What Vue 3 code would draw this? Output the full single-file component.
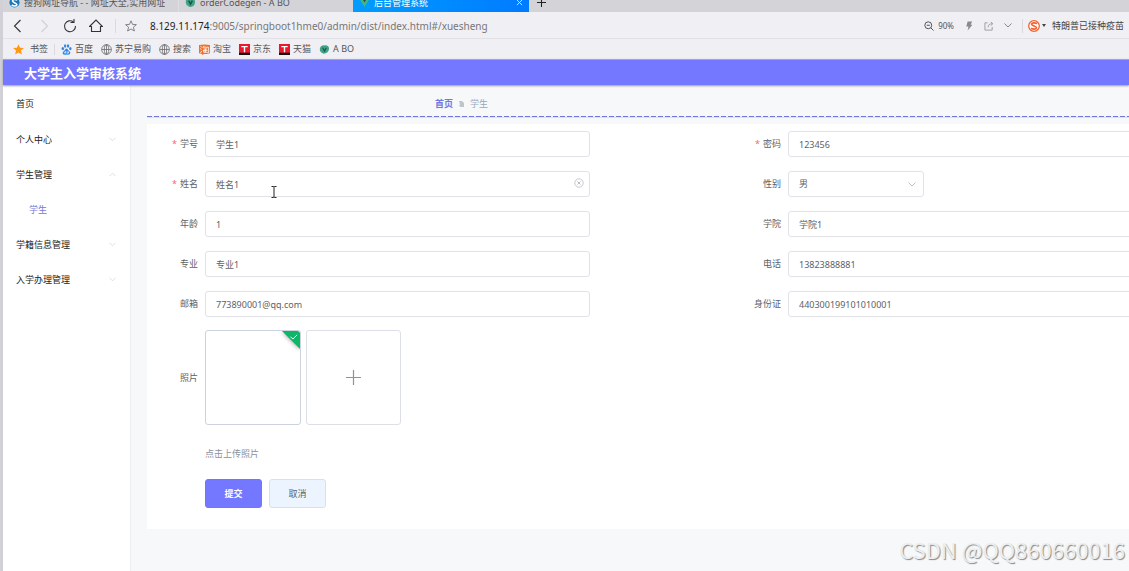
<script setup>
import { reactive } from 'vue'

const form = reactive({
  number: '学生1',
  password: '123456',
  name: '姓名1',
  gender: '男',
  age: '1',
  college: '学院1',
  major: '专业1',
  phone: '13823888881',
  email: '773890001@qq.com',
  idCard: '440300199101010001',
})

const fields = [
  { key: 'number', label: '学号', required: true },
  { key: 'password', label: '密码', required: true },
  { key: 'name', label: '姓名', required: true, clearable: true },
  { key: 'gender', label: '性别', select: true },
  { key: 'age', label: '年龄' },
  { key: 'college', label: '学院' },
  { key: 'major', label: '专业' },
  { key: 'phone', label: '电话' },
  { key: 'email', label: '邮箱' },
  { key: 'idCard', label: '身份证' },
]

const menu = [
  { label: '首页' },
  { label: '个人中心', arrow: 'fold' },
  { label: '学生管理', arrow: 'unfold' },
  { label: '学生', sub: true },
  { label: '学籍信息管理', arrow: 'fold' },
  { label: '入学办理管理', arrow: 'fold' },
]

const bookmarks = [
  { label: '百度', icon: 'paw' },
  { label: '苏宁易购', icon: 'globe' },
  { label: '搜索', icon: 'globe' },
  { label: '淘宝', icon: 'tao' },
  { label: '京东', icon: 't' },
  { label: '天猫', icon: 't' },
  { label: 'A BO', icon: 'v' },
]
</script>

<template>
  <div class="window">
    <div class="tabs">
      <div class="tab tab-first">
        <svg class="tab-icon" viewBox="0 0 12 12"><circle cx="6" cy="6" r="5.500" fill="#1b78b8" /><path d="M9 3.500C7 2 3.500 2.500 4 4.500S9 6.500 8.500 8.500 4.500 10 3 8.500" fill="none" stroke="#fff" stroke-width="1.800" /></svg>
        <span class="fade">搜狗网址导航 - - 网址大全,实用网址,</span>
      </div>
      <div class="tab tab-second">
        <svg class="tab-icon" viewBox="0 0 12 12"><path d="M1 4Q2 1 6 1q5 0 5 5-1 5-6 5Q0 9 1 4Z" fill="#3fa386" /><path d="m4 4 2 4 2-4" fill="none" stroke="#234d48" stroke-width="1.500" /></svg>
        <span>orderCodegen - A BO</span>
      </div>
      <div class="tab tab-active">
        <svg class="tab-icon" viewBox="0 0 12 12"><path d="M0 1h12L6 11Z" fill="#41b883" /><path d="M3 1h6L6 6Z" fill="#34495e" /></svg>
        <span>后台管理系统</span>
        <button class="plain close" aria-label="关闭标签"><svg viewBox="0 0 8 8"><path d="m1 1 6 6M7 1 1 7" stroke="#d8efff" fill="none" /></svg></button>
      </div>
      <button class="plain new-tab" aria-label="新标签"><svg viewBox="0 0 10 10"><path d="M5 0v10M0 5h10" stroke="#222" stroke-width="1.200" fill="none" /></svg></button>
    </div>

    <div class="address">
      <button class="plain nav" aria-label="后退"><svg viewBox="0 0 14 14"><path d="M9.500 1 3.500 7l6 6" class="line dark" /></svg></button>
      <button class="plain nav" aria-label="前进"><svg viewBox="0 0 14 14"><path d="m4.500 1 6 6-6 6" class="line pale" /></svg></button>
      <button class="plain nav" aria-label="刷新"><svg viewBox="0 0 14 14"><path d="M10.500 3A5.500 5.500 0 1 0 12.500 7" class="line dark" /><path d="M7.500 3.500H11V0" class="line dark" /></svg></button>
      <button class="plain nav" aria-label="主页"><svg viewBox="0 0 14 14"><path d="M.5 7.500 7 1l6.500 6.500H11.500v5h-9v-5Z" class="line dark" /></svg></button>
      <i class="bar"></i>
      <button class="plain star" aria-label="收藏"><svg viewBox="0 0 12 12"><path d="m6 .8 1.500 3.600 3.900.3-3 2.500 1 3.800L6 9l-3.400 2 1-3.800-3-2.500 3.900-.3Z" fill="none" stroke="#777" stroke-width=".9" /></svg></button>
      <div class="url"><b>8.129.11.174</b>:9005/springboot1hme0/admin/dist/index.html#/xuesheng</div>
      <div class="tools">
        <span class="zoom"><svg viewBox="0 0 11 11"><circle cx="4.700" cy="4.700" r="3.800" class="line" /><path d="m7.500 7.500 3 3M3 4.700h3.400" class="line" /></svg>90%</span>
        <svg class="bolt" viewBox="0 0 8 11"><path d="M2.500.5h5L5.800 4h2L2.500 10.500 3.400 6H1Z" fill="#8a8a8e" /></svg>
        <svg class="share" viewBox="0 0 11 11"><path d="M4 2H1v8h8V6.500M4.500 7q0-4 4.500-4M7.500 1l2.300 2-2.300 2" fill="none" stroke="#999" /></svg>
        <svg class="down" viewBox="0 0 8 5"><path d="m.5.5 3.500 3.500L7.500.5" fill="none" stroke="#888" /></svg>
        <i class="bar"></i>
        <span class="search"><svg viewBox="0 0 12 12"><circle cx="6" cy="6" r="5.300" fill="#fff" stroke="#f26230" stroke-width="1.300" /><path d="M9 3.700C7 2.500 3.500 2.700 3.700 4.400S8.600 6 8.500 7.800 4.700 9.300 3 8.300" fill="none" stroke="#f26230" stroke-width="1.700" /></svg><i class="caret"></i>特朗普已接种疫苗</span>
      </div>
    </div>

    <nav class="bookmarks">
      <a href="#" class="mark first"><svg viewBox="0 0 12 12"><path d="m6 .2 1.700 3.900 4.200.3-3.200 2.800 1 4.200L6 9.200l-3.700 2.200 1-4.200L.1 4.400l4.200-.3Z" fill="#ff9812" /></svg>书签</a>
      <i class="bar"></i>
      <a v-for="mark in bookmarks" :key="mark.label" href="#" class="mark">
        <svg v-if="mark.icon === 'paw'" viewBox="0 0 12 12" fill="#3386e8"><ellipse cx="2" cy="5" rx="1.400" ry="1.800" /><ellipse cx="4.500" cy="2.300" rx="1.300" ry="1.900" /><ellipse cx="7.700" cy="2.300" rx="1.300" ry="1.900" /><ellipse cx="10.200" cy="5" rx="1.300" ry="1.800" /><path d="M6 5Q7 5 8.200 7q3 2 1.500 4-1 1-3.700.5-3 .7-3.900-.5-1-2 1.700-4Q5 5 6 5Z" /><path d="M5 7.500v2.500H4V8.500M6.700 8v2h1.500V8" fill="none" stroke="#fff" stroke-width=".7" /></svg>
        <svg v-else-if="mark.icon === 'globe'" viewBox="0 0 12 12" fill="none" stroke="#6d6d70" stroke-width=".9"><circle cx="6" cy="6" r="5.300" /><ellipse cx="6" cy="6" rx="2.400" ry="5.300" /><path d="M6 .7v10.600M.7 6h10.600" /></svg>
        <svg v-else-if="mark.icon === 'tao'" viewBox="0 0 12 12"><path d="M0 1q6-1 12 0v9q-3 1-7 1l-1 1-1-1-3-1Z" fill="#f0702a" /><path d="m1.500 2.500 1.500 1M1.200 5l1.500 1M3 7.500 1.500 10M5.500 2 4 4.500M5 3.500h5.500V9.500H9M5 5.500h4M7 5v4M5.200 6.500V9H9M4.500 7.200h4.800" fill="none" stroke="#fff" stroke-width=".9" /></svg>
        <svg v-else-if="mark.icon === 't'" viewBox="0 0 12 12"><path d="M0 0h12v12H0Z" fill="#e8192c" /><path d="M0 9.500h12V12H0Z" fill="#171012" /><path d="M2.500 2.800h7M6 2.500v6.500" stroke="#fff" stroke-width="1.500" /></svg>
        <svg v-else viewBox="0 0 12 12"><path d="M1 5Q2 1 6 1.500q5-.5 5 4-1 5-6 5Q0 9 1 5Z" fill="#3fa386" /><path d="m4 4.200 2 3.500 2-3.500" fill="none" stroke="#234d48" stroke-width="1.200" /></svg>
        {{ mark.label }}
      </a>
    </nav>

    <header class="header"><h1>大学生入学审核系统</h1></header>

    <div class="body">
      <aside class="sidebar">
        <a v-for="item in menu" :key="item.label" href="#" class="item" :class="{ sub: item.sub }">
          {{ item.label }}
          <svg v-if="item.arrow" :class="item.arrow" viewBox="0 0 8 5"><path d="m.5.5 3.500 3.500L7.500.5" fill="none" stroke="#d3d6dd" stroke-width=".9" /></svg>
        </a>
      </aside>

      <main class="main">
        <div class="crumbs">
          <a href="#">首页</a>
          <svg viewBox="0 0 7 8"><path d="M1 1h3l2 2v4H2.500L1 5.500l1-1Z" fill="#c0c4cc" /></svg>
          <span>学生</span>
        </div>
        <div class="dashes"></div>

        <form class="card" @submit.prevent>
          <div class="grid">
            <div v-for="field in fields" :key="field.key" class="row">
              <label :for="field.key"><em v-if="field.required">*</em>{{ field.label }}</label>
              <div v-if="field.select" class="control select">
                <select :id="field.key" v-model="form[field.key]"><option>男</option><option>女</option></select>
                <svg class="arrow" viewBox="0 0 8 5"><path d="m.5.5 3.500 3.500L7.500.5" fill="none" stroke="#c0c4cc" /></svg>
              </div>
              <div v-else class="control">
                <input :id="field.key" v-model="form[field.key]" type="text" />
                <template v-if="field.clearable">
                  <svg class="clear" viewBox="0 0 10 10"><path d="m3.500 3.500 3 3M6.500 3.500l-3 3" fill="none" stroke="#b9bcc4" /><circle cx="5" cy="5" r="4.200" fill="none" stroke="#c6c9d0" /></svg>
                  <svg class="cursor" viewBox="0 0 6 12"><path d="M.5.5h2L3 1l.5-.5h2M3 1v10M.5 11.500h2L3 11l.5.5h2" fill="none" stroke="#222" /></svg>
                </template>
              </div>
            </div>
          </div>

          <div class="row photos">
            <label for="photo">照片</label>
            <div class="tile done">
              <svg viewBox="0 0 19 19"><path d="M0 0h16q3 0 3 3v16Z" fill="#0fb668" /><path d="m9 6 2.500 2.500L16 4" fill="none" stroke="#fff" /></svg>
            </div>
            <button id="photo" type="button" class="tile add" aria-label="添加照片"><svg viewBox="0 0 15 15"><path d="M7.500 0v15M0 7.500h15" stroke="#8c939d" stroke-width="1.200" /></svg></button>
          </div>
          <p class="hint">点击上传照片</p>
          <div class="actions">
            <button type="submit" class="primary">提交</button>
            <button type="button" class="cancel">取消</button>
          </div>
        </form>
      </main>
    </div>
    <div class="watermark">CSDN @QQ860660016</div>
  </div>
</template>

<style>
body { margin: 0; }
</style>

<style scoped>
* { box-sizing: border-box; }
.window { display: flex; flex-direction: column; min-height: 100vh; padding-left: 3px; overflow: hidden; background: #d0d0d6; font: 9px/12px "Noto Sans", "Noto Sans CJK SC", sans-serif; color: #606266; position: relative; }
svg { display: block; flex: none; }
a { color: inherit; text-decoration: none; }
.plain { display: block; padding: 0; border: 0; background: none; flex: none; }
.line { fill: none; stroke: #555; stroke-width: 1.100; }
.dark { stroke: #333; }
.pale { stroke: #d0d0d4; }
.bar { flex: none; width: 1px; height: 14px; background: #d9d9de; }

.tabs { display: flex; align-items: flex-end; height: 12px; overflow: hidden; background: #d4d3d8; color: #555; }
.tab { display: flex; align-items: center; gap: 4px; flex: none; height: 19px; padding: 0 6px; white-space: nowrap; }
.tab-first { width: 176px; border-right: 1px solid #dedee2; }
.tab-second { width: 174px; }
.tab-active { width: 176px; color: #fff; background: linear-gradient(90deg, #009cff, #007bff); }
.tab-icon { width: 11px; height: 11px; }
.fade { width: 141px; overflow: hidden; }
.close { margin-left: auto; }
.close svg { width: 7px; height: 7px; }
.new-tab { height: 20px; margin-left: 8px; }
.new-tab svg { width: 9px; height: 9px; }

.address { display: flex; align-items: center; height: 26px; padding: 1px 5px 0 8px; background: #f0eff4; }
.nav { margin-right: 12px; }
.nav svg { width: 14px; height: 14px; }
.star { margin: 0 13px 0 9px; }
.star svg { width: 12px; height: 12px; }
.url { color: #777; font-size: 10px; white-space: nowrap; }
.url b { color: #222; font-weight: 400; }
.tools { display: flex; align-items: center; margin-left: auto; color: #444; white-space: nowrap; }
.zoom { display: flex; align-items: center; gap: 4px; color: #555; font-size: 8px; }
.zoom svg, .share { width: 10px; height: 10px; }
.bolt { width: 8px; height: 10px; margin: 0 11px; }
.down { width: 8px; height: 5px; margin: 0 10px; }
.search { display: flex; align-items: center; margin-left: 5px; }
.search svg { width: 12px; height: 12px; }
.caret { margin: 0 6px 0 2px; border: 2px solid transparent; border-top: 3px solid #444; border-bottom: 0; }

.bookmarks { display: flex; align-items: center; gap: 8px; height: 21px; padding-left: 10px; border-top: 1px solid #e2e2e6; background: #f0eff4; color: #555; }
.bookmarks .bar { height: 11px; margin: 0 -2px; }
.mark { display: flex; align-items: center; gap: 3px; white-space: nowrap; }
.mark svg { width: 11px; height: 11px; }
.first { gap: 6px; }

.header { display: flex; align-items: center; height: 26px; padding-left: 21px; border-top: 1px solid #a3a3d6; background: #7477ff; box-shadow: 0 1px 2px #999; position: relative; }
h1 { margin: 0; color: #fff; font-size: 13px; line-height: 18px; font-weight: 700; }

.body { display: flex; flex: 1; background: #f6f8fa; }
.sidebar { flex: none; width: 128px; border-right: 1px solid #eeeff2; background: #fff; }
.item { display: flex; align-items: center; justify-content: space-between; height: 35px; padding: 0 14px 0 13px; color: #222; }
.item:first-child { height: 37px; }
.item svg { width: 7px; height: 5px; }
.item .unfold { transform: rotate(180deg); }
.item.sub { padding-left: 26px; color: #7477d8; }

.main { flex: 1; min-width: 0; padding-left: 16px; }
.crumbs { display: flex; align-items: center; gap: 5px; height: 31px; padding: 7px 0 0 288px; color: #97a8be; }
.crumbs a { color: #7477e0; font-weight: 700; }
.crumbs svg { width: 7px; height: 8px; }
.dashes { height: 1px; background: repeating-linear-gradient(90deg, #7576d8 0 5px, #e9ecf8 5px 7px); box-shadow: 0 1px #dfe2f5; }

.card { margin-top: 7px; padding: 7px 0 21px; overflow: hidden; background: #fff; }
.grid { display: grid; grid-template-columns: 583fr 399fr; row-gap: 14px; }
.row { display: flex; align-items: center; min-width: 0; }
label { flex: none; width: 58px; padding-right: 7px; text-align: right; white-space: nowrap; }
em { margin-right: 3px; color: #f56c6c; font-style: normal; }
.control { position: relative; width: 66%; height: 26px; }
.row:nth-child(even) .control:not(.select) { flex: 1; margin-right: -8px; }
.row .select { width: 136px; }
input, select { display: block; width: 100%; height: 100%; padding: 0 10px; border: 1px solid #e0e2e8; border-radius: 3px; outline: 0; background: #fff; color: #606266; font: inherit; appearance: none; }
.arrow { position: absolute; right: 8px; top: 11px; width: 8px; height: 5px; }
.clear { position: absolute; right: 6px; top: 7px; width: 10px; height: 10px; }
.cursor { position: absolute; left: 66px; top: 15px; width: 6px; height: 12px; }

.photos { margin-top: 13px; }
.tile { position: relative; width: 95px; height: 95px; padding: 0; border: 1px solid #dcdfe6; border-radius: 3px; background: #fff; }
.done { width: 96px; margin-right: 5px; overflow: hidden; border-color: #ccd3df; }
.done svg { width: 18px; height: 18px; margin-left: auto; filter: drop-shadow(0 1px 2px #aaa); }
.add { display: grid; place-items: center; }
.add svg { width: 15px; height: 15px; }
.hint { margin: 23px 0 19px 58px; color: #8a909c; }
.actions { display: flex; gap: 7px; padding-left: 58px; }
.actions button { width: 57px; height: 29px; padding: 0; border-radius: 3px; font: inherit; }
.actions .primary { border: 1px solid #7477ee; background: #7477ff; color: #fff; font-weight: 700; }
.cancel { border: 1px solid #dcdfe6; background: #ecf5ff; color: #606266; }
.watermark { position: absolute; right: 4px; bottom: 9px; color: #eceef0; font: 22px/26px "Noto Sans CJK SC", sans-serif; text-shadow: 1px 1px 1px #888; }
</style>
